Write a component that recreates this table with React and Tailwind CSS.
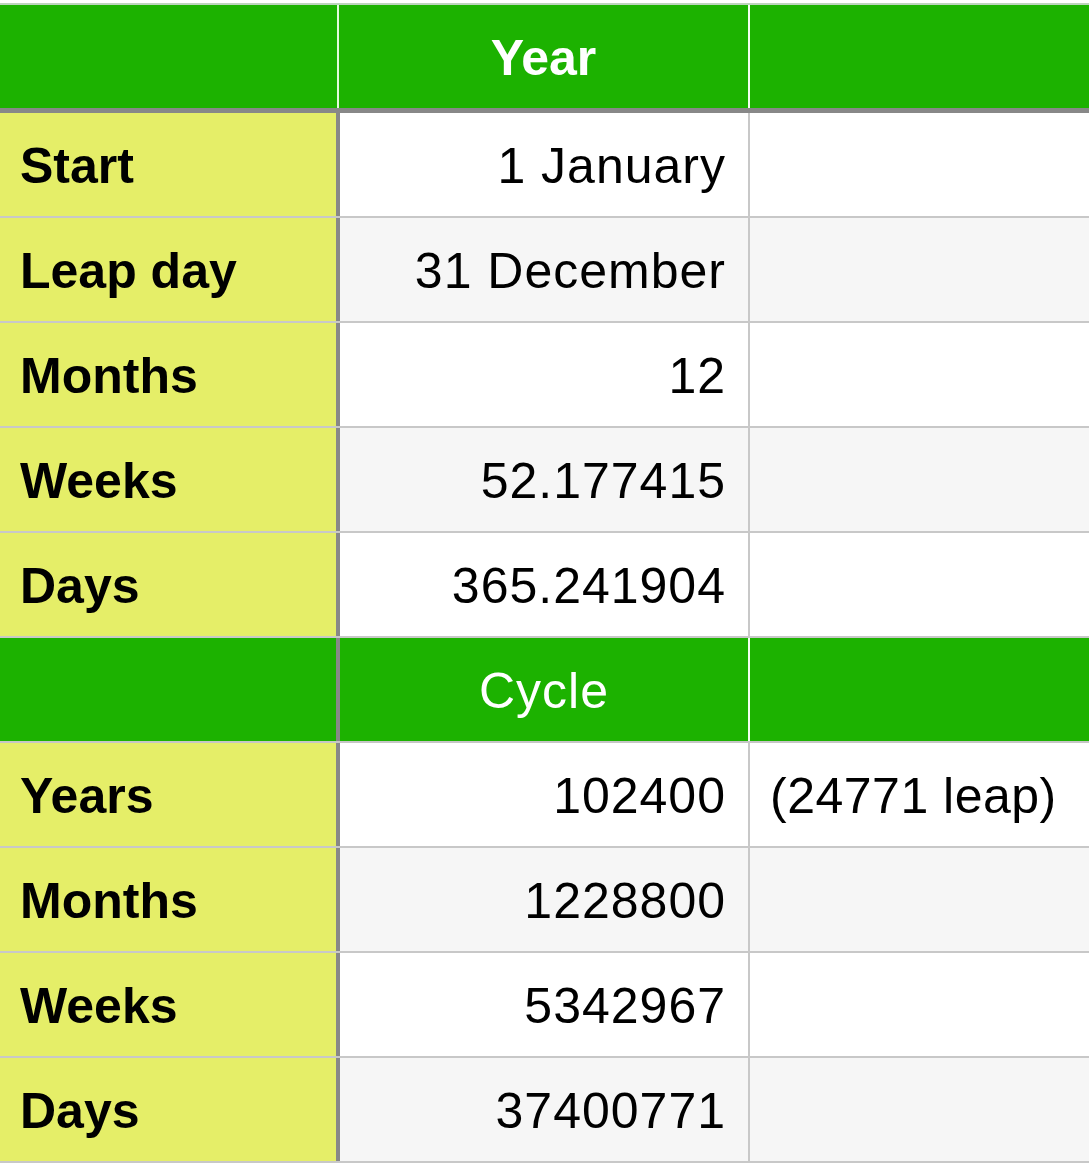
const rowsYear = [
  ["Start", "1 January", ""],
  ["Leap day", "31 December", ""],
  ["Months", "12", ""],
  ["Weeks", "52.177415", ""],
  ["Days", "365.241904", ""],
];

const rowsCycle = [
  ["Years", "102400", "(24771 leap)"],
  ["Months", "1228800", ""],
  ["Weeks", "5342967", ""],
  ["Days", "37400771", ""],
];

const Header = ({ title, first }) => (
  <div
    className={
      "flex bg-[#1cb200] " +
      (first
        ? "h-[110px] border-t-2 border-b-[5px] border-t-[#bdd4bd] border-b-[#888888]"
        : "h-[105px] border-b-2 border-[#c6c6c6]")
    }
  >
    <div className={first ? "w-[339px] border-r-2 border-[#e4fbdc]" : "w-[340px] border-r-4 border-[#888888]"} />
    <div
      className={
        "flex items-center justify-center pt-[3px] text-white text-[50px] border-r-2 border-[#f2fff0] " +
        (first ? "w-[411px] font-bold" : "w-[410px] font-normal tracking-[1px]")
      }
    >
      {title}
    </div>
    <div className="flex-1" />
  </div>
);

const Row = ({ label, value, note, alt }) => (
  <div className={"flex h-[105px] border-b-2 border-[#c8c8c8] " + (alt ? "bg-[#f6f6f6]" : "bg-white")}>
    <div className="w-[340px] bg-[#e5ee68] border-r-4 border-r-[#888888] flex items-center pl-5 pt-[4px] text-[50px] font-bold text-black">
      {label}
    </div>
    <div className="w-[410px] flex items-center justify-end pr-[22px] pt-[4px] text-[50px] tracking-[1px] text-black border-r-2 border-[#c8c8c8]">
      {value}
    </div>
    <div className="flex-1 flex items-center pl-5 pt-[4px] text-[50px] tracking-[0.5px] text-black">{note}</div>
  </div>
);

export default function App() {
  return (
    <div
      className="w-[1089px] h-[1174px] bg-white pt-[3px] overflow-hidden"
      style={{ fontFamily: '"Liberation Sans", Arial, sans-serif' }}
    >
      <Header title="Year" first />
      {rowsYear.map((r, i) => (
        <Row key={"y" + i} label={r[0]} value={r[1]} note={r[2]} alt={i % 2 === 1} />
      ))}
      <Header title="Cycle" />
      {rowsCycle.map((r, i) => (
        <Row key={"c" + i} label={r[0]} value={r[1]} note={r[2]} alt={i % 2 === 1} />
      ))}
    </div>
  );
}
